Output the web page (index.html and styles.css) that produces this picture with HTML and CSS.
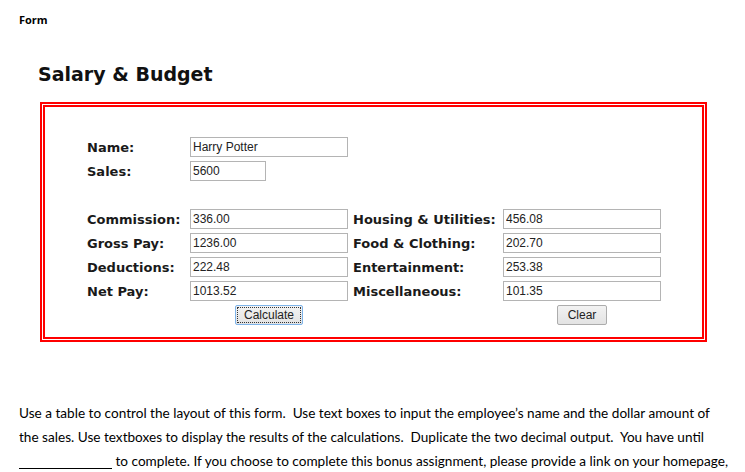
FILE: index.html
```html
<!DOCTYPE html>
<html>
<head>
<meta charset="utf-8">
<link rel="stylesheet" href="styles.css">
</head>
<body>
<div class="page">
  <p class="doc-label">Form</p>
  <h1 class="title">Salary &amp; Budget</h1>
  <form class="budget">
    <div class="grid">
      <label class="lbl">Name:</label>
      <input class="field wide" type="text" value="Harry Potter">
      <span></span><span></span>

      <label class="lbl">Sales:</label>
      <input class="field short" type="text" value="5600">
      <span></span><span></span>

      <span class="blank"></span><span></span><span></span><span></span>

      <label class="lbl">Commission:</label>
      <input class="field wide" type="text" value="336.00">
      <label class="lbl lbl2">Housing &amp; Utilities:</label>
      <input class="field wide" type="text" value="456.08">

      <label class="lbl">Gross Pay:</label>
      <input class="field wide" type="text" value="1236.00">
      <label class="lbl lbl2">Food &amp; Clothing:</label>
      <input class="field wide" type="text" value="202.70">

      <label class="lbl">Deductions:</label>
      <input class="field wide" type="text" value="222.48">
      <label class="lbl lbl2">Entertainment:</label>
      <input class="field wide" type="text" value="253.38">

      <label class="lbl">Net Pay:</label>
      <input class="field wide" type="text" value="1013.52">
      <label class="lbl lbl2">Miscellaneous:</label>
      <input class="field wide" type="text" value="101.35">

      <span></span>
      <div class="btn-cell"><button type="button" class="btn btn-focus"><span class="focus-ring">Calculate</span></button></div>
      <span></span>
      <div class="btn-cell"><button type="button" class="btn">Clear</button></div>
    </div>
  </form>
  <p class="instructions">Use a table to control the layout of this form.&nbsp; Use text boxes to input the employee’s name and the dollar amount of the sales. Use textboxes to display the results of the calculations.&nbsp; Duplicate the two decimal output.&nbsp; You have until <span class="blank-line"></span> to complete. If you choose to complete this bonus assignment, please provide a link on your homepage, This is a <span class="red">bonus</span> assignment worth extra points.</p>
</div>
</body>
</html>
```

FILE: styles.css
```css
html, body {
  margin: 0;
  padding: 0;
  background: #ffffff;
}

.page {
  padding: 0 16px 0 19px;
  color: #000;
}

.doc-label {
  margin: 0;
  padding-top: 12px;
  font-family: "Open Sans", "Liberation Sans", sans-serif;
  font-weight: 700;
  font-size: 11px;
  line-height: 16px;
}

.title {
  margin: 33px 0 0 19px;
  font-family: "DejaVu Sans", sans-serif;
  font-weight: 700;
  font-size: 19px;
  line-height: 26px;
  color: #111;
}

.budget {
  box-sizing: border-box;
  margin: 15px 0 0 21px;
  width: 667px;
  border: 5px double #ff0000;
  padding: 30px 0 12px 42px;
}

.grid {
  display: grid;
  grid-template-columns: 103px 163px 150px 158px;
  grid-auto-rows: 20px;
  row-gap: 4px;
  align-items: center;
}

.lbl {
  font-family: "DejaVu Sans", Verdana, sans-serif;
  font-weight: 700;
  font-size: 13px;
  color: #1a1a1a;
  white-space: nowrap;
}

.field {
  box-sizing: border-box;
  height: 20px;
  border: 1px solid #b4b4b4;
  padding: 0 2px;
  font-family: "Liberation Sans", Arial, sans-serif;
  font-size: 12px;
  color: #222;
  background: #fff;
}

.wide { width: 158px; }
.short { width: 76px; }

.btn-cell {
  width: 158px;
  display: flex;
  justify-content: center;
}

.btn {
  box-sizing: border-box;
  height: 20px;
  padding: 0 10px;
  border: 1px solid #acacac;
  border-radius: 2px;
  background: linear-gradient(#f2f2f2, #e3e3e3);
  font-family: "Liberation Sans", Arial, sans-serif;
  font-size: 12px;
  color: #222;
}

.btn-focus {
  padding: 0 2px;
  border-color: #7eb4ea;
  width: 68px;
}

.focus-ring {
  display: block;
  outline: 1px dotted #333;
  padding: 0 2px;
  line-height: 14px;
}

.instructions {
  margin: 59px 0 0 0;
  font-family: Lato, "Open Sans", sans-serif;
  font-size: 13.6px;
  line-height: 24px;
  color: #000;
}

.blank-line {
  display: inline-block;
  width: 93px;
  border-bottom: 1px solid #000;
  vertical-align: -3px;
}

.red { color: #e00000; }
```
